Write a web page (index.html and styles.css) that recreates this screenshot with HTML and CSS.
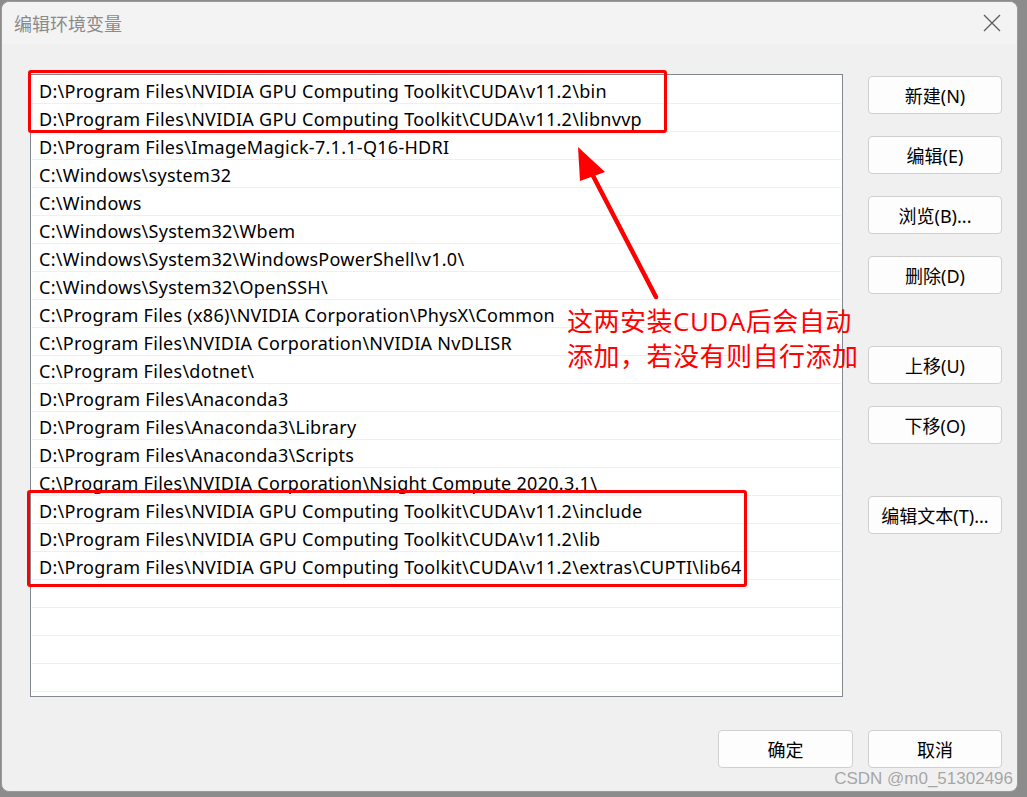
FILE: index.html
```html
<!DOCTYPE html>
<html lang="zh">
<head>
<meta charset="utf-8">
<link rel="stylesheet" href="styles.css">
</head>
<body>
<div class="dialog">
  <div class="titlebar">
    <span class="title">编辑环境变量</span>
    <svg class="close" width="18" height="18" viewBox="0 0 18 18"><path d="M1 1 L17 17 M17 1 L1 17" stroke="#5f5f5f" stroke-width="1.3" fill="none"/></svg>
  </div>
  <div class="content">
    <div class="listwrap">
      <div class="list">
        <div class="row">D:\Program Files\NVIDIA GPU Computing Toolkit\CUDA\v11.2\bin</div>
        <div class="row">D:\Program Files\NVIDIA GPU Computing Toolkit\CUDA\v11.2\libnvvp</div>
        <div class="row">D:\Program Files\ImageMagick-7.1.1-Q16-HDRI</div>
        <div class="row">C:\Windows\system32</div>
        <div class="row">C:\Windows</div>
        <div class="row">C:\Windows\System32\Wbem</div>
        <div class="row">C:\Windows\System32\WindowsPowerShell\v1.0\</div>
        <div class="row">C:\Windows\System32\OpenSSH\</div>
        <div class="row">C:\Program Files (x86)\NVIDIA Corporation\PhysX\Common</div>
        <div class="row">C:\Program Files\NVIDIA Corporation\NVIDIA NvDLISR</div>
        <div class="row">C:\Program Files\dotnet\</div>
        <div class="row">D:\Program Files\Anaconda3</div>
        <div class="row">D:\Program Files\Anaconda3\Library</div>
        <div class="row">D:\Program Files\Anaconda3\Scripts</div>
        <div class="row">C:\Program Files\NVIDIA Corporation\Nsight Compute 2020.3.1\</div>
        <div class="row">D:\Program Files\NVIDIA GPU Computing Toolkit\CUDA\v11.2\include</div>
        <div class="row">D:\Program Files\NVIDIA GPU Computing Toolkit\CUDA\v11.2\lib</div>
        <div class="row">D:\Program Files\NVIDIA GPU Computing Toolkit\CUDA\v11.2\extras\CUPTI\lib64</div>
        <div class="row"></div>
        <div class="row"></div>
        <div class="row"></div>
        <div class="row"></div>
      </div>
      <div class="mark mark1"></div>
      <div class="mark mark2"></div>
      <svg class="arrow" width="100" height="170" viewBox="0 0 100 170">
        <line x1="96" y1="163" x2="30" y2="36" stroke="#ff0000" stroke-width="4.5" stroke-linecap="round"/>
        <polygon points="18,13 45,38 20,47" fill="#ff0000"/>
      </svg>
      <div class="note">这两安装<span class="latin">CUDA</span>后会自动<br>添加，若没有则自行添加</div>
    </div>
    <div class="side">
      <button class="btn">新建(N)</button>
      <button class="btn">编辑(E)</button>
      <button class="btn">浏览(B)...</button>
      <button class="btn">删除(D)</button>
      <button class="btn sep">上移(U)</button>
      <button class="btn">下移(O)</button>
      <button class="btn sep">编辑文本(T)...</button>
    </div>
  </div>
  <div class="footer">
    <button class="btn wide">确定</button>
    <button class="btn">取消</button>
  </div>
  <div class="watermark">CSDN @m0_51302496</div>
</div>
</body>
</html>
```
FILE: styles.css
```css
html, body {
  margin: 0;
  padding: 0;
}
body {
  width: 1027px;
  height: 797px;
  background: #8c8c8c;
  overflow: hidden;
  font-family: "Noto Sans", "Noto Sans CJK SC", sans-serif;
}
.dialog {
  position: relative;
  margin: 1px 0 0 1px;
  width: 1017px;
  height: 791px;
  background: #f0f0f0;
  border: 1px solid #9a9a9a;
  border-radius: 8px;
  box-sizing: border-box;
  display: flex;
  flex-direction: column;
}
.titlebar {
  height: 42px;
  background: #f3f3f3;
  border-radius: 8px 8px 0 0;
  display: flex;
  align-items: center;
  justify-content: space-between;
  padding: 0 16px 0 12px;
}
.title {
  font-family: "Noto Sans CJK SC", sans-serif;
  font-size: 18px;
  color: #8a8a8a;
}
.content {
  display: flex;
  padding: 30px 0 0 28px;
  gap: 25px;
}
.listwrap {
  position: relative;
  width: 813px;
  height: 623px;
}
.list {
  width: 813px;
  height: 623px;
  box-sizing: border-box;
  border: 1px solid #828790;
  background: #ffffff;
  padding: 1px 1px 0 1px;
  overflow: hidden;
}
.row {
  height: 28px;
  box-sizing: border-box;
  border-bottom: 1px solid #efefef;
  padding: 3px 0 0 7px;
  font-size: 18px;
  letter-spacing: 0.28px;
  line-height: 24px;
  color: #000;
  white-space: nowrap;
}
.mark {
  position: absolute;
  border: 3px solid #ff0000;
  border-radius: 3px;
  box-sizing: border-box;
}
.mark1 {
  left: -2px;
  top: -4px;
  width: 639px;
  height: 63px;
}
.mark2 {
  left: -3px;
  top: 416px;
  width: 720px;
  height: 97px;
}
.arrow {
  position: absolute;
  left: 530px;
  top: 60px;
}
.note {
  position: absolute;
  left: 537px;
  top: 229px;
  font-family: "Noto Sans CJK SC", sans-serif;
  font-size: 26px;
  line-height: 33px;
  color: #ff0000;
  white-space: nowrap;
  letter-spacing: 0.5px;
}
.note .latin {
  font-family: "Open Sans", sans-serif;
  letter-spacing: 0.5px;
}
.side {
  display: flex;
  flex-direction: column;
  gap: 22px;
  padding-top: 2px;
}
.btn {
  width: 134px;
  height: 38px;
  background: #fdfdfd;
  border: 1px solid #d0d0d0;
  border-radius: 4px;
  font-family: "Noto Sans", "Noto Sans CJK SC", sans-serif;
  font-size: 18px;
  color: #000;
  padding: 0;
}
.btn.sep {
  margin-top: 30px;
}
.footer {
  display: flex;
  justify-content: flex-end;
  gap: 15px;
  padding: 33px 15px 0 0;
}
.btn.wide {
  width: 135px;
}
.watermark {
  position: absolute;
  right: 4px;
  bottom: 2px;
  font-family: "Liberation Sans", sans-serif;
  font-size: 17px;
  color: rgba(140, 140, 140, 0.75);
}
```
